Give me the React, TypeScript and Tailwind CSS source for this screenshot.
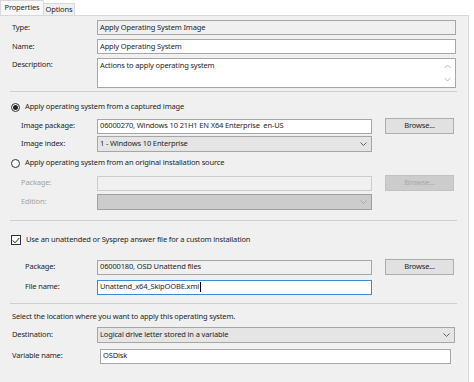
import React from "react";

const font = { fontFamily: '"Noto Sans", "Open Sans", sans-serif' };

function Chevron({ color = "#606060" }: { color?: string }) {
  return (
    <svg width="7" height="5" viewBox="0 0 7 5" className="absolute right-[4px] top-1/2 -translate-y-1/2">
      <path d="M0.5 1 L3.5 4 L6.5 1" fill="none" stroke={color} strokeWidth="1" />
    </svg>
  );
}

function Label({ children, disabled, w }: { children: React.ReactNode; disabled?: boolean; w: string }) {
  return (
    <div className={`${w} shrink-0 leading-none ${disabled ? "text-[#a3a3a3]" : "text-[#1e1e1e]"}`}>{children}</div>
  );
}

function Browse({ disabled }: { disabled?: boolean }) {
  return (
    <div
      className={`ml-[13px] w-[69px] h-[16px] flex items-center justify-center border leading-none ${
        disabled ? "bg-[#cccccc] border-[#c2c2c2] text-[#a8a8a8]" : "bg-[#e1e1e1] border-[#adadad] text-[#1e1e1e]"
      }`}
    >
      Browse...
    </div>
  );
}

export default function App() {
  return (
    <div className="w-[474px] h-[382px] bg-white overflow-hidden text-[7.5px] tracking-[-0.15px]" style={font}>
      {/* tabs */}
      <div className="h-[15px] flex items-end relative">
        <div className="h-[15px] w-[44px] bg-[#f9f9f9] border border-b-0 border-[#d9d9d9] flex items-center justify-center text-[#1e1e1e] relative z-10 leading-none pb-[1px]">
          Properties
        </div>
        <div className="h-[12px] w-[31px] bg-[#f0f0f0] border border-l-0 border-b-0 border-[#d9d9d9] flex items-center justify-center text-[#1e1e1e] leading-none">
          Options
        </div>
      </div>
      <div className="w-[469px] h-[367px] bg-[#f0f0f0] border-t border-r border-[#d9d9d9] flex flex-col">
        {/* Type */}
        <div className="mt-[4px] h-[15px] flex items-center">
          <Label w="w-[97px] pl-[12px]">Type:</Label>
          <div className="w-[359px] h-[15px] border border-[#a6a6a6] bg-[#f0f0f0] flex items-center pl-[2px] leading-none text-[#1e1e1e]">
            Apply Operating System Image
          </div>
        </div>
        {/* Name */}
        <div className="mt-[4px] h-[15px] flex items-center">
          <Label w="w-[97px] pl-[12px]">Name:</Label>
          <div className="w-[359px] h-[15px] border border-[#a6a6a6] bg-white flex items-center pl-[2px] leading-none text-[#1e1e1e]">
            Apply Operating System
          </div>
        </div>
        {/* Description */}
        <div className="mt-[4px] h-[30px] flex items-start">
          <Label w="w-[97px] pl-[12px] pt-[3px]">Description:</Label>
          <div className="w-[359px] h-[30px] border border-[#a6a6a6] bg-white relative pl-[2px] pt-[3px] leading-none text-[#1e1e1e]">
            Actions to apply operating system
            <svg width="7" height="5" viewBox="0 0 7 5" className="absolute right-[4px] top-[5px]">
              <path d="M0.5 4 L3.5 1 L6.5 4" fill="none" stroke="#b8b8b8" strokeWidth="1" />
            </svg>
            <svg width="7" height="5" viewBox="0 0 7 5" className="absolute right-[4px] bottom-[5px]">
              <path d="M0.5 1 L3.5 4 L6.5 1" fill="none" stroke="#b8b8b8" strokeWidth="1" />
            </svg>
          </div>
        </div>
        {/* separator */}
        <div className="mt-[3px] ml-[10px] w-[447px] h-[1px] bg-[#cfcfcf]" />
        {/* Radio 1 */}
        <div className="mt-[9px] h-[12px] flex items-center pl-[11px]">
          <div className="w-[9px] h-[9px] rounded-full border border-[#333] bg-white flex items-center justify-center">
            <div className="w-[5px] h-[5px] rounded-full bg-[#222]" />
          </div>
          <div className="ml-[5px] leading-none text-[#1e1e1e]">Apply operating system from a captured image</div>
        </div>
        {/* Image package */}
        <div className="mt-[5px] h-[16px] flex items-center">
          <Label w="w-[97px] pl-[21px]">Image package:</Label>
          <div className="w-[275px] h-[15px] border border-[#a6a6a6] bg-white flex items-center pl-[2px] leading-none text-[#1e1e1e]">
            06000270, Windows 10 21H1 EN X64 Enterprise&nbsp; en-US
          </div>
          <Browse />
        </div>
        {/* Image index */}
        <div className="mt-[2px] h-[16px] flex items-center">
          <Label w="w-[97px] pl-[21px]">Image index:</Label>
          <div className="w-[275px] h-[16px] border border-[#a6a6a6] bg-[#e5e5e5] flex items-center pl-[2px] leading-none text-[#1e1e1e] relative">
            1 - Windows 10 Enterprise
            <Chevron />
          </div>
        </div>
        {/* Radio 2 */}
        <div className="mt-[5px] h-[12px] flex items-center pl-[11px]">
          <div className="w-[9px] h-[9px] rounded-full border border-[#333] bg-white" />
          <div className="ml-[5px] leading-none text-[#1e1e1e]">Apply operating system from an original installation source</div>
        </div>
        {/* Package disabled */}
        <div className="mt-[6px] h-[16px] flex items-center">
          <Label w="w-[97px] pl-[21px]" disabled>Package:</Label>
          <div className="w-[275px] h-[15px] border border-[#cccccc] bg-[#f0f0f0]" />
          <Browse disabled />
        </div>
        {/* Edition */}
        <div className="mt-[3px] h-[16px] flex items-center">
          <Label w="w-[97px] pl-[21px]" disabled>Edition:</Label>
          <div className="w-[275px] h-[16px] border border-[#a0a0a0] bg-[#cccccc] relative">
            <Chevron color="#a8a8a8" />
          </div>
        </div>
        {/* separator */}
        <div className="mt-[10px] ml-[10px] w-[447px] h-[1px] bg-[#cfcfcf]" />
        {/* Checkbox */}
        <div className="mt-[13px] h-[12px] flex items-center pl-[11px]">
          <div className="w-[10px] h-[10px] border border-[#333] bg-white flex items-center justify-center">
            <svg width="8" height="7" viewBox="0 0 8 7">
              <path d="M0.8 3.5 L3 5.8 L7.3 1" fill="none" stroke="#222" strokeWidth="1" />
            </svg>
          </div>
          <div className="ml-[5px] leading-none text-[#1e1e1e]">Use an unattended or Sysprep answer file for a custom installation</div>
        </div>
        {/* Package */}
        <div className="mt-[13px] h-[16px] flex items-center">
          <Label w="w-[97px] pl-[25px]">Package:</Label>
          <div className="w-[275px] h-[15px] border border-[#a6a6a6] bg-[#f0f0f0] flex items-center pl-[2px] leading-none text-[#1e1e1e]">
            06000180, OSD Unattend files
          </div>
          <Browse />
        </div>
        {/* File name */}
        <div className="mt-[4px] h-[16px] flex items-center">
          <Label w="w-[97px] pl-[25px]">File name:</Label>
          <div className="w-[275px] h-[15px] border border-[#3c8ad5] bg-white flex items-center pl-[2px] leading-none text-[#1e1e1e]">
            Unattend_x64_SkipOOBE.xml
            <span className="inline-block w-[1px] h-[10px] bg-black ml-[1px]" />
          </div>
        </div>
        {/* separator */}
        <div className="mt-[8px] ml-[10px] w-[447px] h-[1px] bg-[#cfcfcf]" />
        {/* text */}
        <div className="mt-[7px] h-[12px] flex items-center pl-[12px] leading-none text-[#1e1e1e]">
          Select the location where you want to apply this operating system.
        </div>
        {/* Destination */}
        <div className="mt-[4px] h-[16px] flex items-center">
          <Label w="w-[97px] pl-[12px]">Destination:</Label>
          <div className="w-[358px] h-[16px] border border-[#a6a6a6] bg-[#e5e5e5] flex items-center pl-[2px] leading-none text-[#1e1e1e] relative">
            Logical drive letter stored in a variable
            <Chevron />
          </div>
        </div>
        {/* Variable name */}
        <div className="mt-[5px] h-[16px] flex items-center">
          <Label w="w-[100px] pl-[12px]">Variable name:</Label>
          <div className="w-[351px] h-[15px] border border-[#a6a6a6] bg-white flex items-center pl-[2px] leading-none text-[#1e1e1e]">
            OSDisk
          </div>
        </div>
      </div>
    </div>
  );
}
